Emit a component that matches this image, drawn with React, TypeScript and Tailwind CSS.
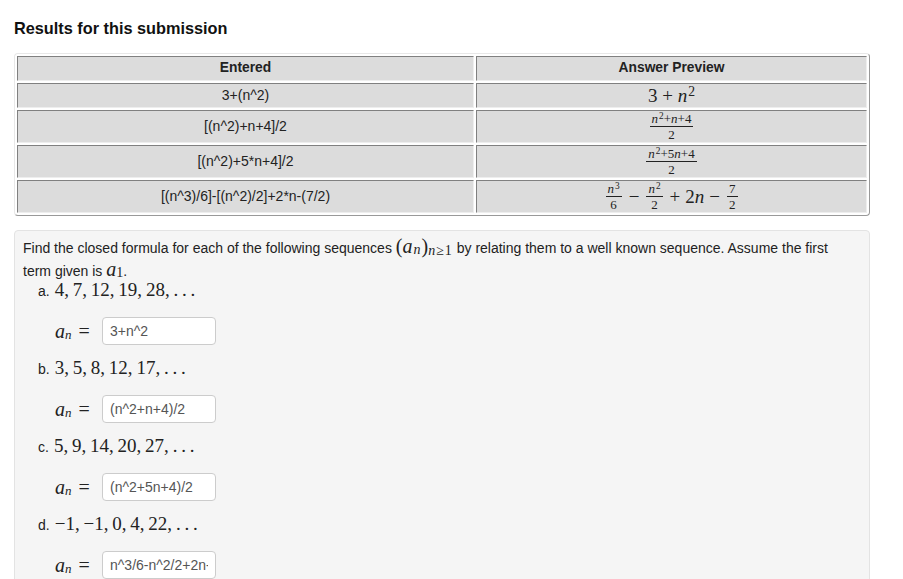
import React from "react";

const serif = "font-['Liberation_Serif','DejaVu_Serif',serif]";

function Frac({ num, den, size = "text-[13px]" }: { num: React.ReactNode; den: React.ReactNode; size?: string }) {
  return (
    <span className={`inline-flex flex-col items-center align-middle mx-[2px] ${size} leading-[13px]`}>
      <span className="px-[2px] border-b border-[#222] pb-[1px]">{num}</span>
      <span className="px-[2px] pt-[1px]">{den}</span>
    </span>
  );
}

function N() {
  return <i>n</i>;
}

function Sup({ children }: { children: React.ReactNode }) {
  return <sup className="text-[0.72em] relative top-[-0.45em] ml-[1px]">{children}</sup>;
}

const rows: { entered: string; preview: React.ReactNode; tall: boolean }[] = [
  {
    entered: "3+(n^2)",
    preview: (
      <span className="text-[19px]">
        3 + <N />
        <Sup>2</Sup>
      </span>
    ),
    tall: false,
  },
  {
    entered: "[(n^2)+n+4]/2",
    preview: (
      <Frac
        num={
          <>
            <N />
            <Sup>2</Sup>+<N />+4
          </>
        }
        den="2"
      />
    ),
    tall: true,
  },
  {
    entered: "[(n^2)+5*n+4]/2",
    preview: (
      <Frac
        num={
          <>
            <N />
            <Sup>2</Sup>+5<N />+4
          </>
        }
        den="2"
      />
    ),
    tall: true,
  },
  {
    entered: "[(n^3)/6]-[(n^2)/2]+2*n-(7/2)",
    preview: (
      <span className="text-[19px] inline-flex items-center">
        <Frac
          num={
            <>
              <N />
              <Sup>3</Sup>
            </>
          }
          den="6"
        />
        <span className="mx-[5px]">−</span>
        <Frac
          num={
            <>
              <N />
              <Sup>2</Sup>
            </>
          }
          den="2"
        />
        <span className="mx-[5px]">+</span>
        2<N />
        <span className="mx-[5px]">−</span>
        <Frac num="7" den="2" />
      </span>
    ),
    tall: true,
  },
];

const cell =
  "bg-[#dcdcdc] border border-t-[#808080] border-l-[#808080] border-b-[#eeeeee] border-r-[#eeeeee] text-center align-middle p-0";

const items = [
  { label: "a.", seq: "4,\u20097,\u200912,\u200919,\u200928,\u2009.\u2009.\u2009.", value: "3+n^2" },
  { label: "b.", seq: "3,\u20095,\u20098,\u200912,\u200917,\u2009.\u2009.\u2009.", value: "(n^2+n+4)/2" },
  { label: "c.", seq: "5,\u20099,\u200914,\u200920,\u200927,\u2009.\u2009.\u2009.", value: "(n^2+5n+4)/2" },
  { label: "d.", seq: "−1,\u2009−1,\u20090,\u20094,\u200922,\u2009.\u2009.\u2009.", value: "n^3/6-n^2/2+2n-7/2" },
];

export default function App() {
  return (
    <div className="w-[903px] h-[579px] overflow-hidden bg-white font-['Liberation_Sans',Arial,sans-serif] text-[#222] px-[14px]">
      <h2 className="pt-[18px] text-[16.3px] leading-[20px] font-bold text-[#111]">Results for this submission</h2>

      <table className="mt-[15px] w-[856px] border-separate border-spacing-[2px] border border-t-[#e8e8e8] border-l-[#e8e8e8] border-b-[#999] border-r-[#999] rounded-[4px] text-[14px]">
        <tbody>
          <tr>
            <th className={`${cell} w-[457px] h-[25px] font-bold text-[13.8px]`}>Entered</th>
            <th className={`${cell} h-[25px] font-bold text-[13.8px]`}>Answer Preview</th>
          </tr>
          {rows.map((r) => (
            <tr key={r.entered}>
              <td className={`${cell} ${r.tall ? "h-[33px]" : "h-[25px]"}`}>{r.entered}</td>
              <td className={`${cell} ${r.tall ? "h-[33px]" : "h-[25px]"} ${serif} leading-none`}>{r.preview}</td>
            </tr>
          ))}
        </tbody>
      </table>

      <div className="mt-[14px] w-[856px] h-[400px] bg-[#f5f5f5] border border-[#e3e3e3] rounded-[4px] px-[8px] pt-[5px] text-[14px]">
        <p className="leading-[22px]">
          Find the closed formula for each of the following sequences{" "}
          <span className={`${serif} text-[20px] leading-none`}>
            (<i className="mr-[1px]">a</i>
            <sub className="text-[14px] relative top-[1px] leading-none">
              <i>n</i>
            </sub>
            <span className="ml-[1px]">)</span>
            <sub className="text-[14px] relative top-[2px] tracking-[1px] leading-none">
              <i>n</i>≥1
            </sub>
          </span>{" "}
          by relating them to a well known sequence. Assume the first
        </p>
        <p className="leading-[20px] h-[20px]">
          term given is{" "}
          <span className={`${serif} text-[20px] leading-none`}>
            <i>a</i>
            <sub className="text-[14px] relative top-[1px] leading-none">1</sub>
          </span>
          .
        </p>
        {items.map((it) => (
          <div key={it.label} className="pl-[15px]">
            <div className="h-[22px] flex items-baseline gap-[5px] leading-[22px]">
              <span className="text-[14px]">{it.label}</span>
              <span className={`${serif} text-[19px]`}>{it.seq}</span>
            </div>
            <div className="mt-[16px] mb-[12px] flex items-center h-[28px] pl-[17px]">
              <span className={`${serif} text-[20px] w-[47px]`}>
                <i>a</i>
                <sub className="text-[13px] relative top-[1px]">
                  <i>n</i>
                </sub>
                <span className="ml-[7px]">=</span>
              </span>
              <input
                readOnly
                value={it.value}
                className="w-[114px] h-[28px] bg-white border border-[#cccccc] rounded-[4px] px-[7px] text-[14px] text-[#555] font-['Liberation_Sans',Arial,sans-serif] outline-none"
              />
            </div>
          </div>
        ))}
      </div>
    </div>
  );
}
